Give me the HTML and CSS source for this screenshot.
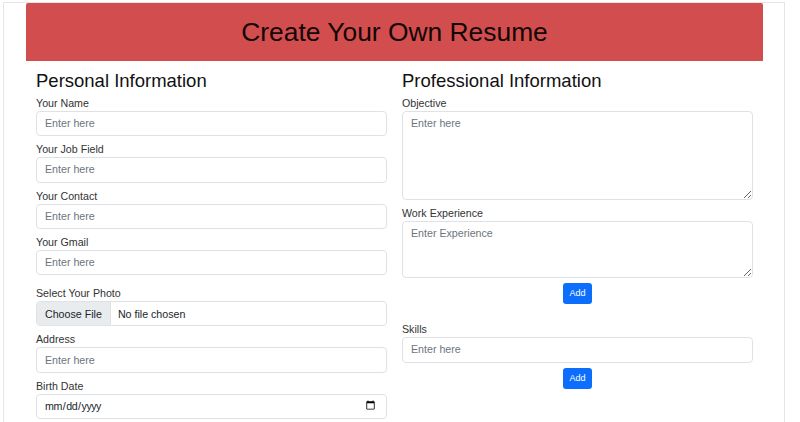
FILE: index.html
```html
<!DOCTYPE html>
<html lang="en">
<head>
  <meta charset="UTF-8" />
  <meta name="viewport" content="width=device-width, initial-scale=1.0" />
  <title>Create Your Own Resume</title>
  <link rel="stylesheet" href="styles.css">
</head>
<body>
  <div class="page">
    <header class="banner">
      <h1>Create Your Own Resume</h1>
    </header>
    <div class="columns">
      <section class="col">
        <h2>Personal Information</h2>
        <div class="field">
          <label for="name">Your Name</label>
          <input type="text" id="name" placeholder="Enter here" />
        </div>
        <div class="field">
          <label for="job">Your Job Field</label>
          <input type="text" id="job" placeholder="Enter here" />
        </div>
        <div class="field">
          <label for="contact">Your Contact</label>
          <input type="text" id="contact" placeholder="Enter here" />
        </div>
        <div class="field">
          <label for="gmail">Your Gmail</label>
          <input type="text" id="gmail" placeholder="Enter here" />
        </div>
        <div class="field photo">
          <label for="photo">Select Your Photo</label>
          <input type="file" id="photo" />
        </div>
        <div class="field">
          <label for="address">Address</label>
          <input type="text" id="address" placeholder="Enter here" />
        </div>
        <div class="field">
          <label for="birth">Birth Date</label>
          <input type="date" id="birth" />
        </div>
      </section>
      <section class="col">
        <h2>Professional Information</h2>
        <div class="field">
          <label for="objective">Objective</label>
          <textarea id="objective" class="tall" placeholder="Enter here"></textarea>
        </div>
        <div class="field">
          <label for="work">Work Experience</label>
          <textarea id="work" class="short" placeholder="Enter Experience"></textarea>
        </div>
        <div class="add-row">
          <button type="button">Add</button>
        </div>
        <div class="field skills">
          <label for="skills">Skills</label>
          <input type="text" id="skills" placeholder="Enter here" />
        </div>
        <div class="add-row">
          <button type="button">Add</button>
        </div>
      </section>
    </div>
  </div>
</body>
</html>
```

FILE: styles.css
```css
* {
  box-sizing: border-box;
}
body {
  margin: 0;
  padding: 2px 15px 0 3px;
  height: 422px;
  background: #fff;
  color: #212529;
  font-family: "Liberation Sans", Arial, sans-serif;
  font-size: 10.67px;
  overflow: hidden;
}
.page {
  height: 420px;
  padding: 0 21px 0 22px;
  border: 1px solid #e6e6e6;
  border-bottom: 0;
}
.banner {
  height: 58px;
  display: flex;
  align-items: center;
  justify-content: center;
  background: #d24e4e;
  border-radius: 2px 2px 0 0;
}
h1 {
  margin: 0;
  font-size: 26.4px;
  font-weight: 400;
  color: #120606;
}
.columns {
  display: grid;
  grid-template-columns: 351px 351px;
  gap: 15px;
  padding: 0 10px;
}
h2 {
  margin: 8px 0 0;
  height: 26px;
  font-size: 18.5px;
  line-height: 24px;
  font-weight: 400;
  color: #111;
}
.field {
  margin-bottom: 4.9px;
}
label {
  display: block;
  height: 16px;
  line-height: 16px;
  color: #333;
}
input,
textarea {
  display: block;
  width: 100%;
  height: 25.4px;
  padding: 0 8px 1px;
  border: 1px solid #dee2e6;
  border-radius: 4px;
  background: #fff;
  color: #212529;
  font-family: inherit;
  font-size: 10.67px;
}
::placeholder {
  color: #6c757d;
  opacity: 1;
}
textarea {
  padding-top: 4px;
  line-height: 15px;
  resize: vertical;
}
.tall {
  height: 89px;
}
.short {
  height: 57px;
}
.photo {
  margin-top: 9.8px;
}
input[type="file"] {
  padding: 0;
  line-height: 23px;
}
input[type="file"]::file-selector-button {
  height: 24px;
  margin: 0 7px 0 0;
  padding: 0 8px;
  border: 0;
  border-right: 1px solid #dee2e6;
  border-radius: 0;
  background: #e9ecef;
  color: #212529;
  font-family: inherit;
  font-size: 10.67px;
}
input[type="date"] {
  padding-left: 7px;
}
input[type="date"]::-webkit-datetime-edit {
  letter-spacing: -0.5px;
}
.add-row {
  display: flex;
  justify-content: center;
}
button {
  width: 29px;
  height: 21px;
  padding: 0;
  border: 0;
  border-radius: 3px;
  background: #0d6efd;
  color: #fff;
  font-family: inherit;
  font-size: 9px;
}
.skills {
  margin-top: 17.5px;
}
```
